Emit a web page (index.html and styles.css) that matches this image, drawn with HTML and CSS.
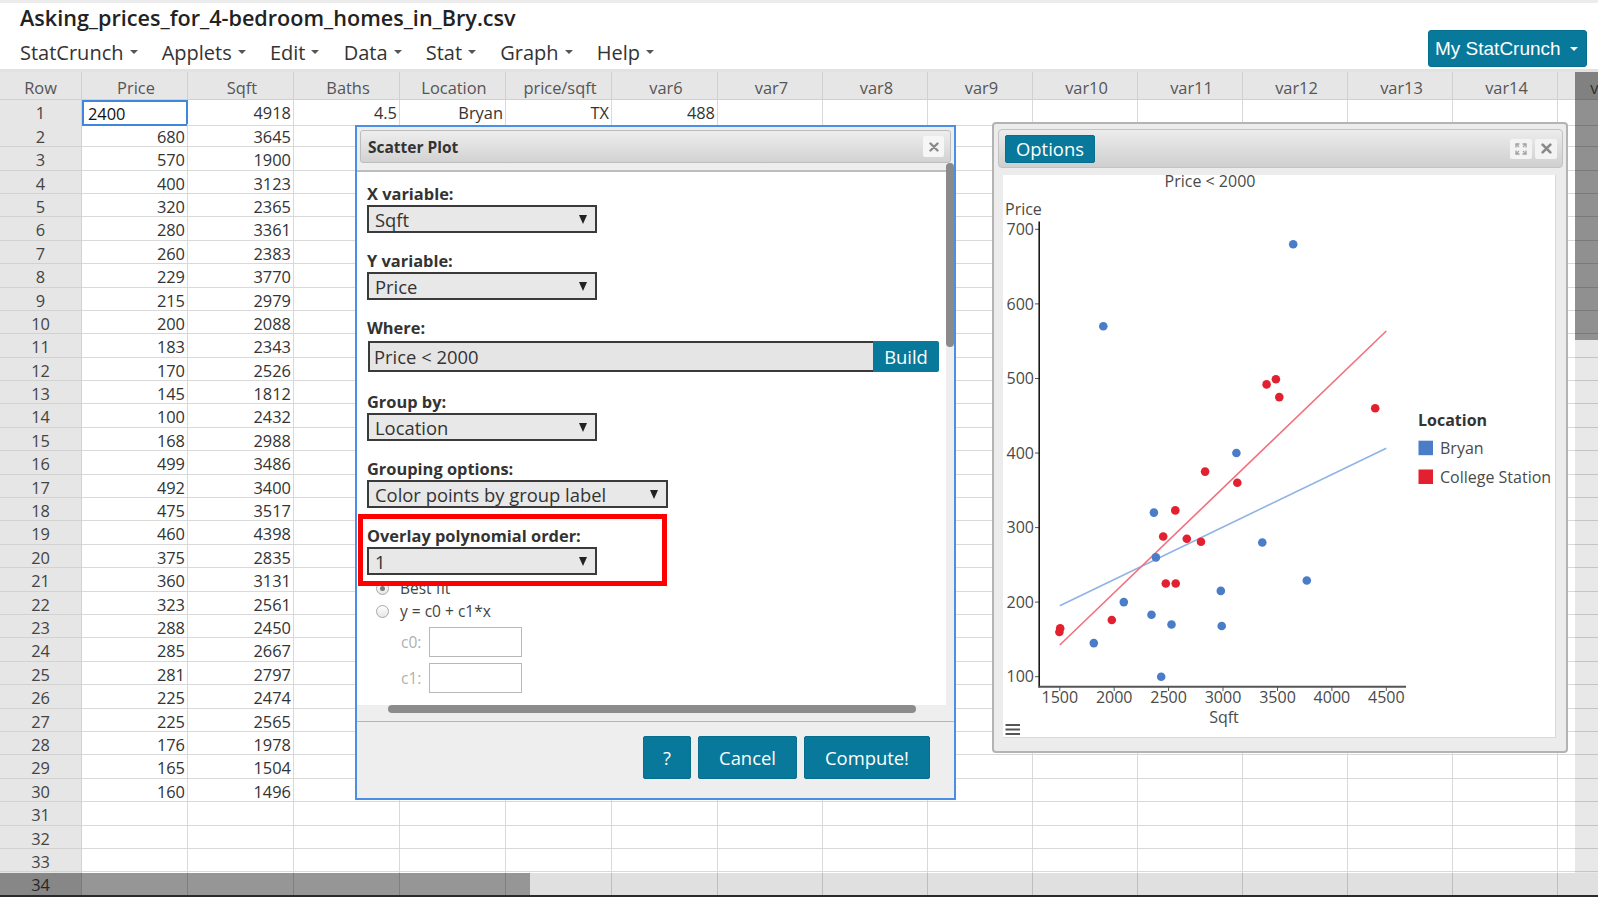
FILE: index.html
```html
<!DOCTYPE html>
<html>
<head>
<meta charset="utf-8">
<title>StatCrunch</title>
<link rel="stylesheet" href="styles.css">
</head>
<body>
<header class="topbar">
  <div class="titles">
    <h1 class="file-title">Asking_prices_for_4-bedroom_homes_in_Bry.csv</h1>
    <nav class="menu">
      <span class="menu-item">StatCrunch<i class="caret"></i></span>
      <span class="menu-item">Applets<i class="caret"></i></span>
      <span class="menu-item">Edit<i class="caret"></i></span>
      <span class="menu-item">Data<i class="caret"></i></span>
      <span class="menu-item">Stat<i class="caret"></i></span>
      <span class="menu-item">Graph<i class="caret"></i></span>
      <span class="menu-item">Help<i class="caret"></i></span>
    </nav>
  </div>
  <button class="my-btn">My StatCrunch<i class="caret white"></i></button>
</header>

<section class="sheet">
  <div class="row head"><span class="rn">Row</span><span>Price</span><span>Sqft</span><span>Baths</span><span>Location</span><span>price/sqft</span><span>var6</span><span>var7</span><span>var8</span><span>var9</span><span>var10</span><span>var11</span><span>var12</span><span>var13</span><span>var14</span><span>var15</span></div>
  <div class="row"><span class="rn">1</span><span class="sel">2400</span><span>4918</span><span>4.5</span><span>Bryan</span><span>TX</span><span>488</span><span></span><span></span><span></span><span></span><span></span><span></span><span></span><span></span><span></span></div>
  <div class="row"><span class="rn">2</span><span>680</span><span>3645</span><span></span><span></span><span></span><span></span><span></span><span></span><span></span><span></span><span></span><span></span><span></span><span></span><span></span></div>
  <div class="row"><span class="rn">3</span><span>570</span><span>1900</span><span></span><span></span><span></span><span></span><span></span><span></span><span></span><span></span><span></span><span></span><span></span><span></span><span></span></div>
  <div class="row"><span class="rn">4</span><span>400</span><span>3123</span><span></span><span></span><span></span><span></span><span></span><span></span><span></span><span></span><span></span><span></span><span></span><span></span><span></span></div>
  <div class="row"><span class="rn">5</span><span>320</span><span>2365</span><span></span><span></span><span></span><span></span><span></span><span></span><span></span><span></span><span></span><span></span><span></span><span></span><span></span></div>
  <div class="row"><span class="rn">6</span><span>280</span><span>3361</span><span></span><span></span><span></span><span></span><span></span><span></span><span></span><span></span><span></span><span></span><span></span><span></span><span></span></div>
  <div class="row"><span class="rn">7</span><span>260</span><span>2383</span><span></span><span></span><span></span><span></span><span></span><span></span><span></span><span></span><span></span><span></span><span></span><span></span><span></span></div>
  <div class="row"><span class="rn">8</span><span>229</span><span>3770</span><span></span><span></span><span></span><span></span><span></span><span></span><span></span><span></span><span></span><span></span><span></span><span></span><span></span></div>
  <div class="row"><span class="rn">9</span><span>215</span><span>2979</span><span></span><span></span><span></span><span></span><span></span><span></span><span></span><span></span><span></span><span></span><span></span><span></span><span></span></div>
  <div class="row"><span class="rn">10</span><span>200</span><span>2088</span><span></span><span></span><span></span><span></span><span></span><span></span><span></span><span></span><span></span><span></span><span></span><span></span><span></span></div>
  <div class="row"><span class="rn">11</span><span>183</span><span>2343</span><span></span><span></span><span></span><span></span><span></span><span></span><span></span><span></span><span></span><span></span><span></span><span></span><span></span></div>
  <div class="row"><span class="rn">12</span><span>170</span><span>2526</span><span></span><span></span><span></span><span></span><span></span><span></span><span></span><span></span><span></span><span></span><span></span><span></span><span></span></div>
  <div class="row"><span class="rn">13</span><span>145</span><span>1812</span><span></span><span></span><span></span><span></span><span></span><span></span><span></span><span></span><span></span><span></span><span></span><span></span><span></span></div>
  <div class="row"><span class="rn">14</span><span>100</span><span>2432</span><span></span><span></span><span></span><span></span><span></span><span></span><span></span><span></span><span></span><span></span><span></span><span></span><span></span></div>
  <div class="row"><span class="rn">15</span><span>168</span><span>2988</span><span></span><span></span><span></span><span></span><span></span><span></span><span></span><span></span><span></span><span></span><span></span><span></span><span></span></div>
  <div class="row"><span class="rn">16</span><span>499</span><span>3486</span><span></span><span></span><span></span><span></span><span></span><span></span><span></span><span></span><span></span><span></span><span></span><span></span><span></span></div>
  <div class="row"><span class="rn">17</span><span>492</span><span>3400</span><span></span><span></span><span></span><span></span><span></span><span></span><span></span><span></span><span></span><span></span><span></span><span></span><span></span></div>
  <div class="row"><span class="rn">18</span><span>475</span><span>3517</span><span></span><span></span><span></span><span></span><span></span><span></span><span></span><span></span><span></span><span></span><span></span><span></span><span></span></div>
  <div class="row"><span class="rn">19</span><span>460</span><span>4398</span><span></span><span></span><span></span><span></span><span></span><span></span><span></span><span></span><span></span><span></span><span></span><span></span><span></span></div>
  <div class="row"><span class="rn">20</span><span>375</span><span>2835</span><span></span><span></span><span></span><span></span><span></span><span></span><span></span><span></span><span></span><span></span><span></span><span></span><span></span></div>
  <div class="row"><span class="rn">21</span><span>360</span><span>3131</span><span></span><span></span><span></span><span></span><span></span><span></span><span></span><span></span><span></span><span></span><span></span><span></span><span></span></div>
  <div class="row"><span class="rn">22</span><span>323</span><span>2561</span><span></span><span></span><span></span><span></span><span></span><span></span><span></span><span></span><span></span><span></span><span></span><span></span><span></span></div>
  <div class="row"><span class="rn">23</span><span>288</span><span>2450</span><span></span><span></span><span></span><span></span><span></span><span></span><span></span><span></span><span></span><span></span><span></span><span></span><span></span></div>
  <div class="row"><span class="rn">24</span><span>285</span><span>2667</span><span></span><span></span><span></span><span></span><span></span><span></span><span></span><span></span><span></span><span></span><span></span><span></span><span></span></div>
  <div class="row"><span class="rn">25</span><span>281</span><span>2797</span><span></span><span></span><span></span><span></span><span></span><span></span><span></span><span></span><span></span><span></span><span></span><span></span><span></span></div>
  <div class="row"><span class="rn">26</span><span>225</span><span>2474</span><span></span><span></span><span></span><span></span><span></span><span></span><span></span><span></span><span></span><span></span><span></span><span></span><span></span></div>
  <div class="row"><span class="rn">27</span><span>225</span><span>2565</span><span></span><span></span><span></span><span></span><span></span><span></span><span></span><span></span><span></span><span></span><span></span><span></span><span></span></div>
  <div class="row"><span class="rn">28</span><span>176</span><span>1978</span><span></span><span></span><span></span><span></span><span></span><span></span><span></span><span></span><span></span><span></span><span></span><span></span><span></span></div>
  <div class="row"><span class="rn">29</span><span>165</span><span>1504</span><span></span><span></span><span></span><span></span><span></span><span></span><span></span><span></span><span></span><span></span><span></span><span></span><span></span></div>
  <div class="row"><span class="rn">30</span><span>160</span><span>1496</span><span></span><span></span><span></span><span></span><span></span><span></span><span></span><span></span><span></span><span></span><span></span><span></span><span></span></div>
  <div class="row"><span class="rn">31</span><span></span><span></span><span></span><span></span><span></span><span></span><span></span><span></span><span></span><span></span><span></span><span></span><span></span><span></span><span></span></div>
  <div class="row"><span class="rn">32</span><span></span><span></span><span></span><span></span><span></span><span></span><span></span><span></span><span></span><span></span><span></span><span></span><span></span><span></span><span></span></div>
  <div class="row"><span class="rn">33</span><span></span><span></span><span></span><span></span><span></span><span></span><span></span><span></span><span></span><span></span><span></span><span></span><span></span><span></span><span></span></div>
  <div class="row"><span class="rn">34</span><span></span><span></span><span></span><span></span><span></span><span></span><span></span><span></span><span></span><span></span><span></span><span></span><span></span><span></span><span></span></div>
  <div class="vscroll"><div class="vthumb"></div></div>
  <div class="hscroll"><div class="hthumb"></div></div>
</section>

<div class="dialog">
  <div class="dlg-head">
    <span class="dlg-title">Scatter Plot</span>
    <span class="xbtn"><svg width="10" height="10" viewBox="0 0 10 10"><path d="M1.5 1.5L8.5 8.5M8.5 1.5L1.5 8.5" stroke="#8a8a8a" stroke-width="2.4" stroke-linecap="round"/></svg></span>
  </div>
  <div class="dlg-sep"></div>
  <div class="dlg-main">
    <div class="dlg-body">
      <div class="field">
        <label>X variable:</label>
        <div class="select"><span>Sqft</span><i class="arrow"></i></div>
      </div>
      <div class="field">
        <label>Y variable:</label>
        <div class="select"><span>Price</span><i class="arrow"></i></div>
      </div>
      <div class="field where-field">
        <label>Where:</label>
        <div class="where"><div class="where-input">Price &lt; 2000</div><div class="build">Build</div></div>
      </div>
      <div class="field">
        <label>Group by:</label>
        <div class="select"><span>Location</span><i class="arrow"></i></div>
      </div>
      <div class="field">
        <label>Grouping options:</label>
        <div class="select wide"><span>Color points by group label</span><i class="arrow"></i></div>
      </div>
      <div class="field last">
        <label>Overlay polynomial order:</label>
        <div class="select"><span>1</span><i class="arrow"></i></div>
      </div>
      <div class="radio-row first"><i class="radio checked"></i><span>Best fit</span></div>
      <div class="radio-row"><i class="radio"></i><span>y = c0 + c1*x</span></div>
      <div class="coef c0"><span class="coef-label">c0:</span><div class="coef-input"></div></div>
      <div class="coef c1"><span class="coef-label">c1:</span><div class="coef-input"></div></div>
    </div>
    <div class="dlg-vtrack"></div>
  </div>
  <div class="dlg-hbar"><div class="dlg-hthumb"></div></div>
  <div class="dlg-foot">
    <button class="btn help">?</button>
    <button class="btn cancel">Cancel</button>
    <button class="btn compute">Compute!</button>
  </div>
  <div class="dlg-vthumb"></div>
  <div class="highlight"></div>
</div>

<div class="options-win">
  <div class="ow-head">
    <button class="opt-btn">Options</button>
    <div class="ow-tools">
      <span class="tool"><svg width="12" height="12" viewBox="0 0 12 12"><path d="M1 4.5V1h3.5M7.5 1H11v3.5M11 7.5V11H7.5M4.5 11H1V7.5" fill="none" stroke="#a0a0a0" stroke-width="1.3"/><path d="M1 1l3 3M11 1L8 4M11 11L8 8M1 11l3-3" stroke="#a0a0a0" stroke-width="1.1"/></svg></span>
      <span class="tool"><svg width="11" height="11" viewBox="0 0 10 10"><path d="M1.5 1.5L8.5 8.5M8.5 1.5L1.5 8.5" stroke="#8a8a8a" stroke-width="2.4" stroke-linecap="round"/></svg></span>
    </div>
  </div>
  <div class="ow-plot">
    <svg class="plot" width="553" height="563" viewBox="0 0 553 563">
      <text class="pt" x="207" y="12" text-anchor="middle">Price &lt; 2000</text>
      <text class="pt" x="2" y="40">Price</text>
      <g stroke="#555" stroke-width="1">
        <line x1="32" y1="54.3" x2="36" y2="54.3"/>
        <line x1="32" y1="128.9" x2="36" y2="128.9"/>
        <line x1="32" y1="203.5" x2="36" y2="203.5"/>
        <line x1="32" y1="278" x2="36" y2="278"/>
        <line x1="32" y1="352.6" x2="36" y2="352.6"/>
        <line x1="32" y1="427.1" x2="36" y2="427.1"/>
        <line x1="32" y1="501.7" x2="36" y2="501.7"/>
        <line x1="56.8" y1="512" x2="56.8" y2="516"/>
        <line x1="111.2" y1="512" x2="111.2" y2="516"/>
        <line x1="165.6" y1="512" x2="165.6" y2="516"/>
        <line x1="220" y1="512" x2="220" y2="516"/>
        <line x1="274.5" y1="512" x2="274.5" y2="516"/>
        <line x1="328.9" y1="512" x2="328.9" y2="516"/>
        <line x1="383.3" y1="512" x2="383.3" y2="516"/>
      </g>
      <line x1="36.2" y1="46.5" x2="36.2" y2="512.5" stroke="#1a1a1a" stroke-width="1.6"/>
      <line x1="35.5" y1="511.8" x2="403" y2="511.8" stroke="#555" stroke-width="2"/>
      <g class="pt" text-anchor="end">
        <text x="31" y="60">700</text>
        <text x="31" y="134.6">600</text>
        <text x="31" y="209.2">500</text>
        <text x="31" y="283.7">400</text>
        <text x="31" y="358.3">300</text>
        <text x="31" y="432.8">200</text>
        <text x="31" y="507.4">100</text>
      </g>
      <g class="pt" text-anchor="middle">
        <text x="56.8" y="527.5">1500</text>
        <text x="111.2" y="527.5">2000</text>
        <text x="165.6" y="527.5">2500</text>
        <text x="220" y="527.5">3000</text>
        <text x="274.5" y="527.5">3500</text>
        <text x="328.9" y="527.5">4000</text>
        <text x="383.3" y="527.5">4500</text>
        <text x="221" y="548">Sqft</text>
      </g>
      <line x1="56.8" y1="430.7" x2="383.3" y2="273.3" stroke="#8fb3e6" stroke-width="1.6"/>
      <line x1="56.8" y1="470" x2="383.3" y2="156" stroke="#f2707c" stroke-width="1.6"/>
      <g fill="#4a7cc8">
        <circle cx="290.2" cy="69.2" r="4.3"/>
        <circle cx="100.3" cy="151.2" r="4.3"/>
        <circle cx="233.4" cy="278" r="4.3"/>
        <circle cx="150.9" cy="337.6" r="4.3"/>
        <circle cx="259.3" cy="367.5" r="4.3"/>
        <circle cx="152.9" cy="382.4" r="4.3"/>
        <circle cx="303.8" cy="405.5" r="4.3"/>
        <circle cx="217.8" cy="415.9" r="4.3"/>
        <circle cx="120.8" cy="427.1" r="4.3"/>
        <circle cx="148.5" cy="439.8" r="4.3"/>
        <circle cx="168.5" cy="449.5" r="4.3"/>
        <circle cx="90.8" cy="468.1" r="4.3"/>
        <circle cx="158.2" cy="501.7" r="4.3"/>
        <circle cx="218.7" cy="451" r="4.3"/>
      </g>
      <g fill="#e3202f">
        <circle cx="272.9" cy="204.2" r="4.3"/>
        <circle cx="263.6" cy="209.4" r="4.3"/>
        <circle cx="276.3" cy="222.1" r="4.3"/>
        <circle cx="372.2" cy="233.2" r="4.3"/>
        <circle cx="202.1" cy="296.6" r="4.3"/>
        <circle cx="234.3" cy="307.8" r="4.3"/>
        <circle cx="172.3" cy="335.4" r="4.3"/>
        <circle cx="160.2" cy="361.5" r="4.3"/>
        <circle cx="183.8" cy="363.7" r="4.3"/>
        <circle cx="198" cy="366.7" r="4.3"/>
        <circle cx="162.8" cy="408.5" r="4.3"/>
        <circle cx="172.7" cy="408.5" r="4.3"/>
        <circle cx="108.8" cy="445" r="4.3"/>
        <circle cx="57.2" cy="453.2" r="4.3"/>
        <circle cx="56.4" cy="457" r="4.3"/>
      </g>
      <text class="lg-title" x="415" y="251">Location</text>
      <rect x="415.5" y="265.7" width="14.5" height="14.5" fill="#4a7cc8"/>
      <text class="pt" x="437" y="279">Bryan</text>
      <rect x="415.5" y="294.5" width="14.5" height="14.5" fill="#e3202f"/>
      <text class="pt" x="437" y="308">College Station</text>
      <g stroke="#555" stroke-width="2">
        <line x1="2.5" y1="550" x2="17" y2="550"/>
        <line x1="2.5" y1="554.5" x2="17" y2="554.5"/>
        <line x1="2.5" y1="559" x2="17" y2="559"/>
      </g>
    </svg>
  </div>
</div>
</body>
</html>
```

FILE: styles.css
```css
* { box-sizing: border-box; }
html, body { margin: 0; padding: 0; }
body {
  width: 1598px;
  height: 897px;
  overflow: hidden;
  position: relative;
  background: #fff;
  color: #333;
  font-family: "Open Sans", "DejaVu Sans", sans-serif;
}

/* ---------- top bar ---------- */
.topbar {
  height: 69px;
  border-top: 3px solid #ececec;
  display: flex;
  justify-content: space-between;
  align-items: flex-start;
  padding: 0 11px 0 20px;
}
.file-title {
  margin: 0;
  font-size: 21.6px;
  font-weight: 600;
  line-height: 30px;
  color: #222;
}
.menu {
  display: flex;
  gap: 24.2px;
  margin-top: 4px;
  height: 30px;
  align-items: center;
  font-size: 20px;
  color: #333;
}
.menu-item { display: flex; align-items: center; gap: 6px; }
.caret {
  display: inline-block;
  width: 0; height: 0;
  border-left: 4px solid transparent;
  border-right: 4px solid transparent;
  border-top: 4px solid #555;
}
.caret.white { border-top-color: #fff; margin-left: 9px; }
.my-btn {
  margin-top: 27px;
  height: 37px;
  width: 159px;
  padding: 0 0 0 6px;
  background: #08799a;
  color: #fff;
  border: 1px solid #066f8d;
  border-radius: 3px;
  font-family: "Liberation Sans", Arial, sans-serif;
  font-size: 19px;
  display: flex;
  align-items: center;
}

/* ---------- spreadsheet ---------- */
.sheet {
  position: relative;
  height: 828px;
  border-top: 3px solid #e2e2e2;
  overflow: hidden;
}
.row {
  display: grid;
  grid-template-columns: 82px repeat(6, 106px) repeat(9, 105px);
  height: 23.4px;
}
.row > span {
  border-right: 1px solid #d9d9d9;
  border-bottom: 1px solid #d9d9d9;
  text-align: right;
  padding: 3px 2px 0 0;
  font-size: 16.4px;
  line-height: 19.4px;
  white-space: nowrap;
  color: #333;
}
.row > .rn {
  background: #e6e6e6;
  text-align: center;
  padding-right: 0;
  color: #444;
  border-color: #d2d2d2;
}
.row.head { height: 28.4px; background: #e6e6e6; }
.row.head > span {
  text-align: center;
  padding: 4px 0 0 3px;
  line-height: 23.4px;
  color: #555;
  border-color: #d0d0d0;
}
.row.head > .rn { padding-left: 0; }
.row > .sel {
  border: 2px solid #3f86dc;
  text-align: left;
  padding: 2px 0 0 4px;
  line-height: 19.4px;
  color: #111;
}
.vscroll {
  position: absolute;
  right: 0;
  top: -2px;
  width: 23px;
  height: 803px;
  background: rgba(0, 0, 0, 0.09);
}
.vthumb { height: 270px; background: rgba(0, 0, 0, 0.38); }
.hscroll {
  position: absolute;
  left: 0;
  right: 0;
  bottom: 0;
  height: 24px;
  background: rgba(0, 0, 0, 0.12);
  border-bottom: 2px solid #2a2a2a;
}
.hthumb { width: 530px; height: 22px; background: rgba(0, 0, 0, 0.33); }

/* ---------- scatter plot dialog ---------- */
.dialog {
  position: absolute;
  left: 355px;
  top: 125px;
  width: 601px;
  height: 675px;
  border: 2px solid #4a8fe3;
  background: #eee;
  display: flex;
  flex-direction: column;
}
.dlg-head {
  margin: 3px 3px 0 3px;
  height: 33px;
  flex: none;
  border: 1px solid #bdbdbd;
  border-radius: 3px;
  background: linear-gradient(#eeeeee, #d2d2d2);
  display: flex;
  align-items: center;
  justify-content: space-between;
  padding: 0 6px 0 7px;
}
.dlg-title { font-weight: 700; font-size: 15.5px; color: #333; }
.xbtn {
  width: 21px;
  height: 21px;
  background: #f6f6f6;
  border-radius: 2px;
  display: flex;
  align-items: center;
  justify-content: center;
}
.dlg-sep { margin-top: 7px; height: 2px; flex: none; background: #bdbdbd; }
.dlg-main { height: 533px; flex: none; display: flex; }
.dlg-body { flex: 1; background: #fff; padding: 11px 0 0 10px; }
.dlg-vtrack { width: 8px; background: #eee; }
.dlg-vthumb {
  position: absolute;
  left: 589px;
  top: 36px;
  width: 8px;
  height: 184px;
  background: #8a8a8a;
  border-radius: 4px;
}
.dlg-hbar { height: 8px; flex: none; padding-left: 31px; }
.dlg-hthumb { width: 528px; height: 8px; background: #8c8c8c; border-radius: 4px; }
.dlg-foot {
  margin-top: 8px;
  flex: 1;
  border-top: 1px solid #b5b5b5;
  display: flex;
  justify-content: flex-end;
  align-items: flex-start;
  gap: 7px;
  padding: 14px 24px 0 0;
}
.btn {
  height: 43px;
  background: #08799a;
  color: #fff;
  border: 1px solid #066f8d;
  border-radius: 2px;
  font-family: "Open Sans", sans-serif;
  font-size: 18.4px;
  padding: 0;
}
.btn.help { width: 48px; }
.btn.cancel { width: 99px; }
.btn.compute { width: 126px; }

.field { margin-bottom: 17px; }
.field.where-field { margin-bottom: 19px; }
.field.last { margin-bottom: 2px; }
.field label {
  display: block;
  font-weight: 700;
  font-size: 16.4px;
  line-height: 22px;
  color: #333;
}
.select {
  width: 230px;
  height: 28px;
  border: 2px solid #3a3a3a;
  background: #e8e8e8;
  display: flex;
  align-items: center;
  justify-content: space-between;
  padding: 0 8px 0 6px;
  font-size: 18.4px;
  color: #333;
}
.select.wide { width: 301px; }
.arrow {
  width: 0; height: 0;
  border-left: 4.5px solid transparent;
  border-right: 4.5px solid transparent;
  border-top: 9px solid #222;
}
.where { display: flex; height: 31px; margin-top: 2px; margin-left: 1px; }
.where-input {
  width: 505px;
  border: 2px solid #3a3a3a;
  border-right: none;
  background: #e5e5e5;
  font-size: 18.4px;
  line-height: 27px;
  padding-left: 4px;
  color: #333;
}
.build {
  width: 66px;
  background: #08799a;
  color: #fff;
  font-size: 18.4px;
  line-height: 31px;
  text-align: center;
  border-radius: 0 2px 2px 0;
}
.radio-row {
  display: flex;
  align-items: center;
  height: 22px;
  padding-left: 9px;
  gap: 11px;
  font-size: 15.5px;
  color: #444;
  margin-top: 1px;
}
.radio {
  width: 13px;
  height: 13px;
  border-radius: 50%;
  border: 1px solid #a8a8a8;
  background: linear-gradient(#ffffff, #e6e6e6);
  display: flex;
  align-items: center;
  justify-content: center;
}
.radio.checked::after {
  content: "";
  width: 5px;
  height: 5px;
  border-radius: 50%;
  background: #777;
}
.coef { display: flex; align-items: center; margin-left: 34px; height: 30px; }
.coef.c0 { margin-top: 5px; }
.coef.c1 { margin-top: 6px; }
.coef-label { width: 28px; font-size: 15.5px; color: #b0b0b0; }
.coef-input { width: 93px; height: 30px; border: 1px solid #b8b8b8; background: #fff; }
.highlight {
  position: absolute;
  left: 1px;
  top: 387px;
  width: 309px;
  height: 72px;
  border: 5px solid #ff0000;
}

/* ---------- options / graph window ---------- */
.options-win {
  position: absolute;
  left: 992px;
  top: 122px;
  width: 576px;
  height: 631px;
  border: 2px solid #b3b3b3;
  border-radius: 4px;
  background: #ececec;
  padding: 5px 3px 0 4px;
}
.ow-head {
  height: 39px;
  border: 1px solid #c2c2c2;
  border-radius: 4px;
  background: linear-gradient(#ececec, #cfcfcf);
  display: flex;
  align-items: center;
  justify-content: space-between;
  padding: 0 5px 0 6px;
}
.opt-btn {
  width: 90px;
  height: 28px;
  padding: 0;
  background: #08799a;
  color: #fff;
  border: 1px solid #066f8d;
  border-radius: 2px;
  font-family: "Open Sans", sans-serif;
  font-size: 18.4px;
}
.ow-tools { display: flex; gap: 3px; }
.tool {
  width: 22px;
  height: 20px;
  background: #f3f3f3;
  border-radius: 2px;
  display: flex;
  align-items: center;
  justify-content: center;
}
.ow-plot {
  margin: 7px 0 0 5px;
  width: 553px;
  height: 563px;
  background: #fff;
  border-right: 1px solid #d8d8d8;
  border-bottom: 1px solid #d8d8d8;
}
.plot { display: block; overflow: visible; }
.pt {
  font-family: "Open Sans", sans-serif;
  font-size: 16px;
  fill: #4a4a4a;
}
.lg-title {
  font-family: "Open Sans", sans-serif;
  font-size: 16px;
  font-weight: 700;
  fill: #333;
}
```
